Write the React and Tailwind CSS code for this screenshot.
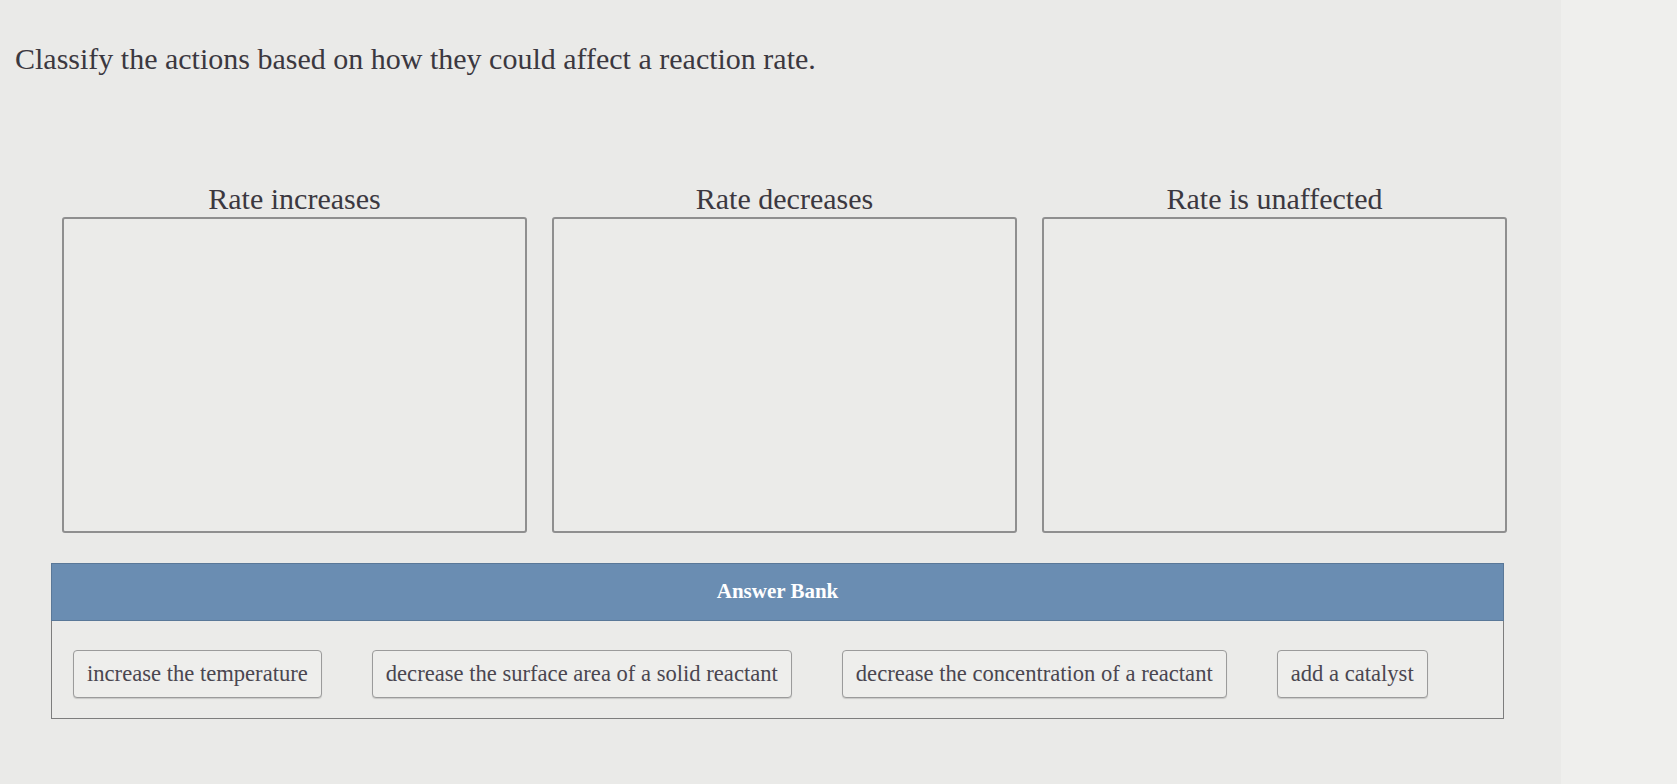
const CATEGORIES = ['Rate increases', 'Rate decreases', 'Rate is unaffected'];

const ANSWERS = [
  'increase the temperature',
  'decrease the surface area of a solid reactant',
  'decrease the concentration of a reactant',
  'add a catalyst',
];

export default function App() {
  return (
    <div
      className="flex h-[784px] w-[1677px] overflow-hidden bg-[#e8e8e6] text-[#3b3840]"
      style={{ fontFamily: '"Liberation Serif", "Times New Roman", serif' }}
    >
      <div className="w-[1561px] shrink-0 bg-[#eaeae8] pl-[15px] pt-[42px]">
        <h1 className="text-[30px] leading-[34px]">
          Classify the actions based on how they could affect a reaction rate.
        </h1>

        {/* Zonas para soltar */}
        <div className="ml-[47px] mt-[106px] grid w-[1445px] grid-cols-3 gap-[25px]">
          {CATEGORIES.map((cat) => (
            <div key={cat} className="flex flex-col items-center">
              <div className="mb-[1px] text-[30px] leading-[34px]">{cat}</div>
              <div className="h-[316px] w-full rounded-[3px] border-2 border-[#8f8f8f] bg-[#ebebe9]"></div>
            </div>
          ))}
        </div>

        {/* Banco de respuestas */}
        <div className="ml-[36px] mt-[30px] w-[1453px]">
          <div className="flex h-[58px] items-center justify-center border border-[#5a7898] bg-[#6a8db2] text-[21px] font-bold text-white">
            Answer Bank
          </div>
          <div className="flex h-[98px] items-start gap-[50px] border border-t-0 border-[#7d7d7d] bg-[#ebebe9] pl-[21px] pt-[29px]">
            {ANSWERS.map((a) => (
              <div
                key={a}
                className="flex h-[48px] items-center rounded-[4px] border border-[#9b9b9b] bg-[#eeeeec] px-[13px] text-[22.6px] text-[#4a4650] shadow-[0_1px_1px_rgba(0,0,0,0.15)]"
              >
                {a}
              </div>
            ))}
          </div>
        </div>
      </div>
      <div className="flex-1 bg-[#efefed]"></div>
    </div>
  );
}
